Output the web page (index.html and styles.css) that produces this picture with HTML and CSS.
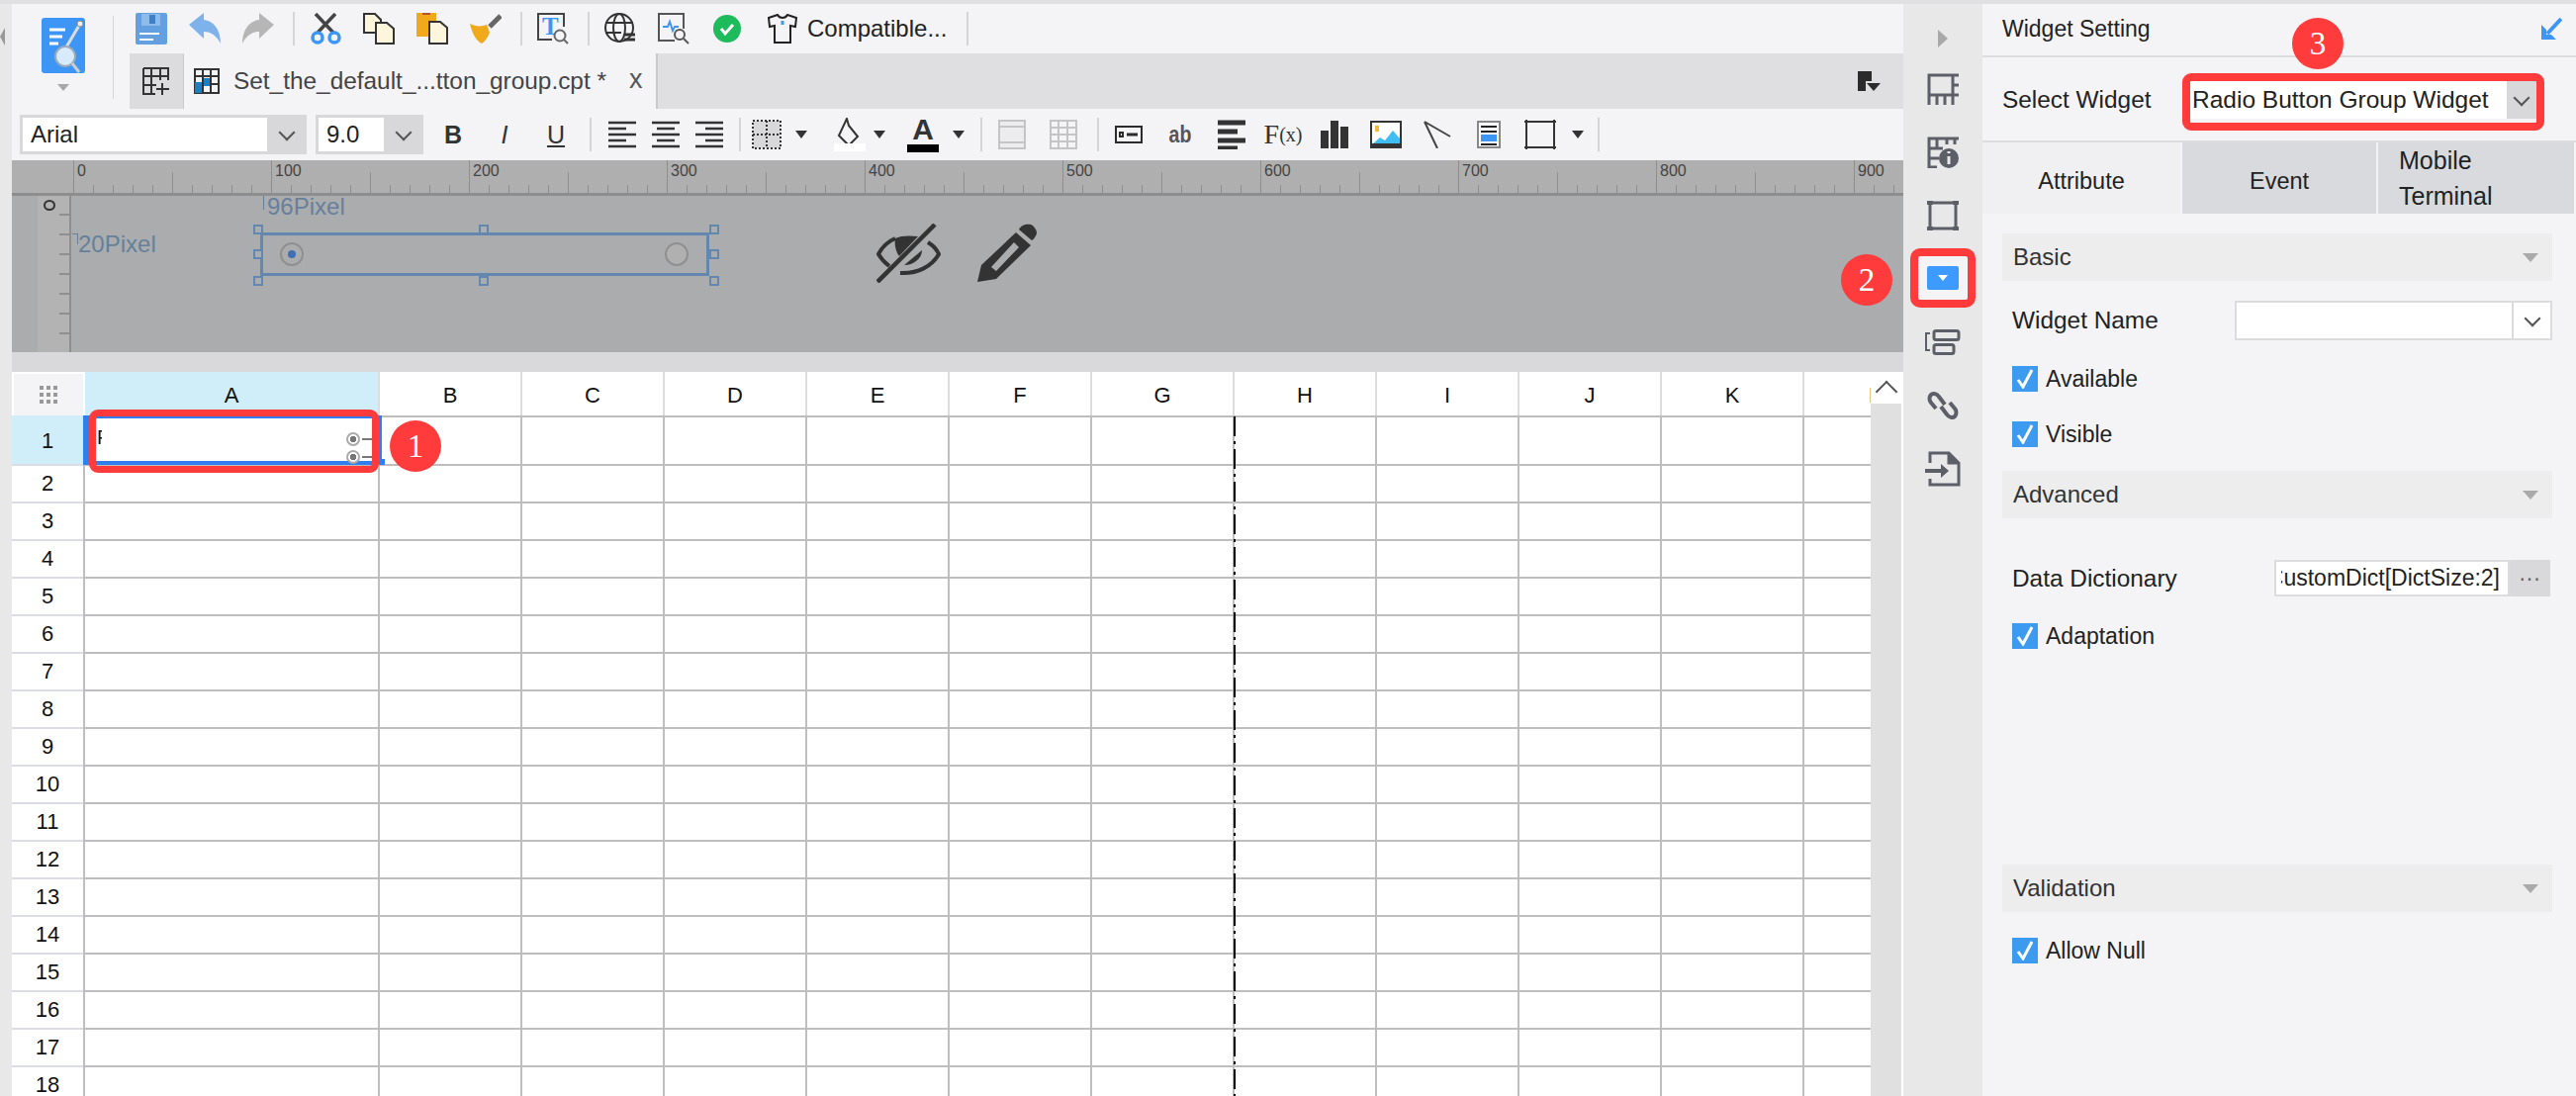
FILE: index.html
```html
<!DOCTYPE html>
<html lang="en">

<head>
    <meta charset="UTF-8">
    <title>Widget Setting</title>
    <link rel="stylesheet" href="styles.css">
</head>

<body>
    <div class="top-strip"></div>
    <div class="main">
        <div class="left-strip"><span class="left-arrow"></span></div>

        <div class="editor">
            <div class="head">
                <div class="logo-col">
                    <svg width="44" height="56" viewBox="0 0 44 56">
                        <rect width="44" height="56" rx="3" fill="#3d96f5"/>
                        <path d="M8 12h16M8 19h13M8 26h9" stroke="#fff" stroke-width="3"/>
                        <path d="M39 6L23 33" stroke="#ddd" stroke-width="3"/>
                        <circle cx="39" cy="6" r="3" fill="#eee" stroke="#888"/>
                        <circle cx="24" cy="39" r="10" fill="#d7ebfb" stroke="#9ab" stroke-width="2"/>
                        <path d="M31 46l7 9" stroke="#ccc" stroke-width="3"/>
                    </svg>
                    <span class="logo-tri"></span>
                </div>
                <div class="head-right">
                    <div class="toolrow">
                        <span class="tool">
                            <svg width="32" height="32" viewBox="0 0 32 32"><rect width="32" height="32" rx="2" fill="#649fdf"/><rect x="6" y="1" width="19" height="12" fill="#8dbcec"/><rect x="14" y="2" width="6" height="9" fill="#3f7fc4"/><path d="M4 21h20M4 27h14" stroke="#fff" stroke-width="2"/></svg>
                        </span>
                        <span class="tool">
                            <svg width="32" height="32" viewBox="0 0 32 32"><path d="M0 12L15 0v7c9 1 17 9 17 24-4-8-10-12-17-12v7z" fill="#7db3ea"/></svg>
                        </span>
                        <span class="tool">
                            <svg width="32" height="32" viewBox="0 0 32 32"><path d="M32 12L17 0v7C8 8 0 16 0 31c4-8 10-12 17-12v7z" fill="#b6b6b6"/></svg>
                        </span>
                        <span class="sep"></span>
                        <span class="tool">
                            <svg width="32" height="32" viewBox="0 0 32 32"><path d="M6 1l18 19M26 1L8 20" stroke="#444" stroke-width="3.500"/><circle cx="8" cy="25" r="5" fill="none" stroke="#3d96f5" stroke-width="3.500"/><circle cx="25" cy="25" r="5" fill="none" stroke="#3d96f5" stroke-width="3.500"/></svg>
                        </span>
                        <span class="tool">
                            <svg width="32" height="32" viewBox="0 0 32 32"><path d="M1 1h11l6 6v13H1z" fill="#fdf5dc" stroke="#333" stroke-width="2"/><path d="M13 10h11l7 6v15H13z" fill="#fdf5dc" stroke="#333" stroke-width="2"/></svg>
                        </span>
                        <span class="tool">
                            <svg width="32" height="32" viewBox="0 0 32 32"><rect width="20" height="24" fill="#f0a91a"/><rect x="6" width="8" height="2" fill="#b5532a"/><path d="M13 9h11l7 6v16H13z" fill="#fdf5dc" stroke="#333" stroke-width="2"/></svg>
                        </span>
                        <span class="tool">
                            <svg width="32" height="32" viewBox="0 0 32 32"><path d="M0 11c6 3 12 3 17 1l3 8c-2 5-5 9-8 11C6 28 2 20 0 11z" fill="#f0a91a"/><path d="M20 14L31 3" stroke="#666" stroke-width="5"/></svg>
                        </span>
                        <span class="sep"></span>
                        <span class="tool">
                            <svg width="32" height="32" viewBox="0 0 32 32"><path d="M15 27H1V1h26v13" fill="none" stroke="#444" stroke-width="2"/><text x="5" y="22" class="svg-t">T</text><circle cx="23" cy="23" r="5.500" fill="none" stroke="#666" stroke-width="2"/><path d="M27 27l4 4" stroke="#666" stroke-width="2"/></svg>
                        </span>
                        <span class="sep"></span>
                        <span class="tool">
                            <svg width="32" height="32" viewBox="0 0 32 32" fill="none" stroke="#333" stroke-width="2"><circle cx="15" cy="15" r="14"/><ellipse cx="15" cy="15" rx="6" ry="14"/><path d="M1 10h28M1 20h16"/><path d="M20 22h11M20 27h11" stroke-width="3"/></svg>
                        </span>
                        <span class="tool">
                            <svg width="32" height="32" viewBox="0 0 32 32" fill="none"><path d="M17 28H1V1h25v15" stroke="#555" stroke-width="2"/><path d="M5 14h5l2-5 3 9 2-4h4" stroke="#3d96f5" stroke-width="2"/><circle cx="22" cy="22" r="5" stroke="#555" stroke-width="2"/><path d="M26 26l5 5" stroke="#555" stroke-width="2"/></svg>
                        </span>
                        <span class="tool">
                            <svg width="28" height="28" viewBox="0 0 28 28"><circle cx="14" cy="14" r="14" fill="#1dbb5c"/><path d="M8 14l4 5 8-9" fill="none" stroke="#fff" stroke-width="3"/></svg>
                        </span>
                        <span class="tool shirt">
                            <svg width="30" height="30" viewBox="0 0 30 30" fill="none"><path d="M10 1L1 4l1 9 5-1v17h16V12l5 1 1-9-9-3c-2 4-8 4-10 0z" stroke="#222" stroke-width="2"/><path d="M15 7v4" stroke="#3d96f5" stroke-width="3"/></svg>
                        </span>
                        <span class="compat">Compatible...</span>
                        <span class="sep sep-wide"></span>
                    </div>
                    <div class="tabbar">
                        <div class="tab-new">
                            <svg width="28" height="28" viewBox="0 0 28 28" fill="none" stroke="#333" stroke-width="2"><path d="M1 1h25v12M1 1v26h12M1 9h25M1 18h13M9 1v26M18 1v12M20 16v12M14 22h13"/></svg>
                        </div>
                        <div class="tab">
                            <svg width="26" height="26" viewBox="0 0 26 26" fill="none" stroke="#333" stroke-width="2"><path d="M1 1h24v24H1zM1 8h24M1 16h24M9 1v24M17 1v24"/><path d="M1 14h7v11H1zM10 10h6v8h-6z" fill="#1b7fc4" stroke="none"/></svg>
                            <span class="tab-name">Set_the_default_...tton_group.cpt *</span>
                            <span class="tab-close">x</span>
                        </div>
                        <span class="tab-menu">
                            <svg width="24" height="20" viewBox="0 0 24 20"><path d="M0 0h14v10H8v10H0z" fill="#2b2b2b"/><path d="M9 12h14l-7 8z" fill="#2b2b2b"/></svg>
                        </span>
                    </div>
                </div>
            </div>

            <div class="format-row">
                <div class="combo combo-font"><span class="combo-val">Arial</span><span class="combo-btn"><i class="chev"></i></span></div>
                <div class="combo combo-size"><span class="combo-val">9.0</span><span class="combo-btn"><i class="chev"></i></span></div>
                <span class="tool ftxt bold">B</span>
                <span class="tool ftxt ital">I</span>
                <span class="tool ftxt under">U</span>
                <span class="sep"></span>
                <span class="tool w44 first-align"><svg width="28" height="28" viewBox="0 0 28 28" stroke="#333" stroke-width="2.400"><path d="M0 2h28M0 8h18M0 14h28M0 20h18M0 26h28"/></svg></span>
                <span class="tool w44"><svg width="28" height="28" viewBox="0 0 28 28" stroke="#333" stroke-width="2.400"><path d="M0 2h28M5 8h18M0 14h28M5 20h18M0 26h28"/></svg></span>
                <span class="tool w44"><svg width="28" height="28" viewBox="0 0 28 28" stroke="#333" stroke-width="2.400"><path d="M0 2h28M10 8h18M0 14h28M10 20h18M0 26h28"/></svg></span>
                <span class="sep"></span>
                <span class="tool w44"><svg width="30" height="30" viewBox="0 0 30 30"><rect x="1" y="1" width="28" height="28" fill="#d8d8da" stroke="#333" stroke-width="2" stroke-dasharray="2 2"/><path d="M15 1v28M1 15h28" stroke="#333" stroke-width="2" stroke-dasharray="2 2"/></svg></span>
                <span class="tool w26"><i class="tri"></i></span>
                <span class="tool bucket"><svg width="32" height="34" viewBox="0 0 32 34"><path d="M13 1l2 7 9 11-9 9-10-10z" fill="#f4f4f7" stroke="#333" stroke-width="2"/><rect y="26" width="32" height="8" fill="#fff" stroke="none"/></svg></span>
                <span class="tool w16"><i class="tri"></i></span>
                <span class="tool font-color"><span class="fc-a">A</span><span class="fc-bar"></span></span>
                <span class="tool w28"><i class="tri"></i></span>
                <span class="sep"></span>
                <span class="tool"><svg width="28" height="30" viewBox="0 0 28 30" fill="none" stroke="#c4c4c6" stroke-width="2"><rect x="1" y="1" width="26" height="28" fill="#ececee"/><path d="M1 7h26M1 23h26"/></svg></span>
                <span class="tool"><svg width="28" height="30" viewBox="0 0 28 30" fill="none" stroke="#c4c4c6" stroke-width="2"><rect x="1" y="1" width="26" height="28"/><path d="M1 8h26M1 15h26M1 22h26M9 1v28M18 1v28"/></svg></span>
                <span class="sep"></span>
                <span class="tool"><svg width="28" height="18" viewBox="0 0 28 18" fill="none" stroke="#2b2b2b" stroke-width="2"><rect x="1" y="1" width="26" height="16"/><rect x="5" y="7" width="3" height="4"/><path d="M12 9h11" stroke-width="3"/></svg></span>
                <span class="tool ab">ab</span>
                <span class="tool"><svg width="28" height="30" viewBox="0 0 28 30" stroke="#333" stroke-width="5"><path d="M0 3h28M0 12h20M0 21h28M0 29h20"/></svg></span>
                <span class="tool fx">F<small>(x)</small></span>
                <span class="tool"><svg width="28" height="28" viewBox="0 0 28 28" fill="#333"><rect y="10" width="8" height="18"/><rect x="10" width="8" height="28"/><rect x="20" y="6" width="8" height="22"/></svg></span>
                <span class="tool"><svg width="32" height="28" viewBox="0 0 32 28"><rect x="1" y="1" width="30" height="26" fill="#fff" stroke="#333" stroke-width="2"/><path d="M2 24l8-7 5 3 8-10 7 8v8H2z" fill="#40bdf5"/><rect x="5" y="5" width="4" height="6" fill="#f5b942"/><rect y="23" width="32" height="5" fill="#333"/></svg></span>
                <span class="tool"><svg width="28" height="28" viewBox="0 0 28 28" fill="none" stroke="#444" stroke-width="2"><path d="M1 1l13 27M1 1l26 15"/></svg></span>
                <span class="tool"><svg width="24" height="28" viewBox="0 0 24 28"><rect x="1" y="1" width="22" height="26" fill="#fff" stroke="#888" stroke-width="2"/><path d="M4 6h16M4 11h16M4 24h16" stroke="#222" stroke-width="2"/><rect x="4" y="14" width="16" height="7" fill="#3d96f5"/></svg></span>
                <span class="tool"><svg width="32" height="30" viewBox="0 0 32 30" fill="#f4f4f7" stroke="#333" stroke-width="2"><rect x="2" y="2" width="28" height="26"/><path d="M0 2h32M0 28h32M2 0v30M30 0v30"/></svg></span>
                <span class="tool w24"><i class="tri"></i></span>
                <span class="sep"></span>
            </div>

            <div class="canvas">
                <div class="ruler-h">
                    <span>0</span><span>100</span><span>200</span><span>300</span><span>400</span>
                    <span>500</span><span>600</span><span>700</span><span>800</span><span>900</span>
                </div>
                <div class="canvas-body">
                    <div class="ruler-v"><i class="ruler-zero"></i></div>
                </div>
                <span class="px-label px-w">96Pixel</span>
                <span class="px-label px-h">20Pixel</span>
                <div class="widget">
                    <span class="radio on"></span>
                    <span class="radio"></span>
                    <i class="hd hl ht"></i><i class="hd hc ht"></i><i class="hd hr ht"></i>
                    <i class="hd hl hm"></i><i class="hd hr hm"></i>
                    <i class="hd hl hb"></i><i class="hd hc hb"></i><i class="hd hr hb"></i>
                </div>
                <svg class="eye-off" width="65" height="60" viewBox="0 0 65 60">
                    <path d="M19 15c5-3 15-3 23-2L23 33c-4-5-5-13-4-18z" fill="#333"/>
                    <path d="M19 15C12 18 6 23 2 31c3 5 7 9 11 12" fill="none" stroke="#333" stroke-width="4"/>
                    <path d="M46 27c0 8-8 15-18 15z" fill="#333"/>
                    <path d="M52 19c5 3 9 7 11 12-7 12-21 20-39 19" fill="none" stroke="#333" stroke-width="4"/>
                    <path d="M1 59L59 1" stroke="#333" stroke-width="4.500"/>
                </svg>
                <svg class="pencil" width="61" height="60" viewBox="0 0 61 60">
                    <path d="M0 59l4-17L39 9l15 13-35 34z" fill="#333"/>
                    <path d="M14 44l23-25 5 5-23 24z" fill="#abacae"/>
                    <path d="M42 6c2-5 8-6 12-5 4 2 6 6 6 9-1 3-3 6-5 7z" fill="#333"/>
                </svg>
            </div>

            <div class="band"></div>

            <div class="sheet">
                <div class="sheet-main">
                    <div class="col-head">
                        <div class="corner"><span class="dots"></span></div>
                        <div class="col col-a">A</div>
                        <div class="col">B</div><div class="col">C</div><div class="col">D</div>
                        <div class="col">E</div><div class="col">F</div><div class="col">G</div>
                        <div class="col">H</div><div class="col">I</div><div class="col">J</div>
                        <div class="col">K</div><div class="col">L</div>
                    </div>
                    <div class="row row-first"><div class="rh">1</div><div class="rc"></div></div>
                    <div class="row"><div class="rh">2</div><div class="rc"></div></div>
                    <div class="row"><div class="rh">3</div><div class="rc"></div></div>
                    <div class="row"><div class="rh">4</div><div class="rc"></div></div>
                    <div class="row"><div class="rh">5</div><div class="rc"></div></div>
                    <div class="row"><div class="rh">6</div><div class="rc"></div></div>
                    <div class="row"><div class="rh">7</div><div class="rc"></div></div>
                    <div class="row"><div class="rh">8</div><div class="rc"></div></div>
                    <div class="row"><div class="rh">9</div><div class="rc"></div></div>
                    <div class="row"><div class="rh">10</div><div class="rc"></div></div>
                    <div class="row"><div class="rh">11</div><div class="rc"></div></div>
                    <div class="row"><div class="rh">12</div><div class="rc"></div></div>
                    <div class="row"><div class="rh">13</div><div class="rc"></div></div>
                    <div class="row"><div class="rh">14</div><div class="rc"></div></div>
                    <div class="row"><div class="rh">15</div><div class="rc"></div></div>
                    <div class="row"><div class="rh">16</div><div class="rc"></div></div>
                    <div class="row"><div class="rh">17</div><div class="rc"></div></div>
                    <div class="row"><div class="rh">18</div><div class="rc"></div></div>

                    <div class="page-break"></div>
                    <div class="cell-sel">
                        <span class="cell-f">F</span>
                        <div class="mini-radios"><span class="mini"></span><span class="mini"></span></div>
                    </div>
                </div>
                <div class="scroll">
                    <div class="scroll-up"><i class="chev up"></i></div>
                </div>
            </div>
        </div>

        <div class="sidebar">
            <span class="side-arrow"></span>
            <div class="side-btn">
                <svg width="32" height="32" viewBox="0 0 32 32" fill="none" stroke="#5c5f68" stroke-width="3"><path d="M2 32V2h30M2 22h30M26 2v20M26 12h6M10 22v10M18 22v10M26 22v10"/></svg>
            </div>
            <div class="side-btn">
                <svg width="32" height="32" viewBox="0 0 32 32" fill="none" stroke="#5c5f68" stroke-width="3"><path d="M2 32V2h30M2 12h14M2 22h10M10 2v10M20 2v6M28 2v6M2 31h8"/><circle cx="22" cy="22" r="10" fill="#5c5f68" stroke="none"/><path d="M22 20v8M22 15v2" stroke="#e8e8e8"/></svg>
            </div>
            <div class="side-btn">
                <svg width="32" height="32" viewBox="0 0 32 32" fill="none" stroke="#5c5f68" stroke-width="3"><rect x="3" y="3" width="26" height="26"/><path d="M0 3h6M26 3h6M0 29h6M26 29h6" stroke-width="4"/></svg>
            </div>
            <div class="side-btn active">
                <span class="combo-ico"><i></i></span>
            </div>
            <div class="side-btn">
                <svg width="36" height="26" viewBox="0 0 36 26" fill="none" stroke="#5c5f68" stroke-width="3"><path d="M5 4H1v17h4" stroke-width="2"/><rect x="9" y="1.500" width="25" height="9" rx="2"/><rect x="9" y="15.500" width="20" height="9" rx="2"/></svg>
            </div>
            <div class="side-btn">
                <svg width="32" height="32" viewBox="0 0 32 32" fill="none" stroke="#5c5f68" stroke-width="4"><path d="M18 15l-6-8c-2-3-6-4-8-2s-2 6 0 8l5 6"/><path d="M14 17l6 8c2 3 6 4 8 2s2-6 0-8l-5-6"/></svg>
            </div>
            <div class="side-btn">
                <svg width="36" height="36" viewBox="0 0 36 36" fill="none" stroke="#5c5f68" stroke-width="3"><path d="M5 12V2h19l10 10v22H5v-6"/><path d="M24 2v10h10" fill="#5c5f68"/><path d="M0 20h20" stroke-width="4"/><path d="M16 13l8 7-8 7z" fill="#5c5f68" stroke="none"/></svg>
            </div>
        </div>

        <div class="panel">
            <div class="panel-head">
                <span>Widget Setting</span>
                <svg width="22" height="24" viewBox="0 0 22 24"><path d="M21 2L7 17" stroke="#3d96f5" stroke-width="4"/><path d="M1 8v15h15l-5-5H6v-5z" fill="#3d96f5"/></svg>
            </div>
            <div class="select-row">
                <span class="select-label">Select Widget</span>
                <div class="combo combo-widget"><span class="combo-val">Radio Button Group Widget</span><span class="combo-btn"><i class="chev"></i></span></div>
            </div>
            <div class="tabs">
                <div class="ptab ptab-on">Attribute</div>
                <div class="ptab ptab-event">Event</div>
                <div class="ptab ptab-two">Mobile<br>Terminal</div>
            </div>
            <div class="panel-body">
                <div class="section">Basic<i class="sec-tri"></i></div>
                <div class="field name-field">
                    <span class="field-label name-label">Widget Name</span>
                    <div class="name-input"><span></span><span class="name-btn"><i class="chev"></i></span></div>
                </div>
                <label class="check check-first"><span class="box"><svg width="18" height="20" viewBox="0 0 18 20"><path d="M2 11l5 7 9-17" fill="none" stroke="#fff" stroke-width="3"/></svg></span>Available</label>
                <label class="check check-next"><span class="box"><svg width="18" height="20" viewBox="0 0 18 20"><path d="M2 11l5 7 9-17" fill="none" stroke="#fff" stroke-width="3"/></svg></span>Visible</label>
                <div class="section sec-adv">Advanced<i class="sec-tri"></i></div>
                <div class="field dict-field">
                    <span class="field-label dict-label">Data Dictionary</span>
                    <div class="dict-input"><span class="dict-val"><span>CustomDict[DictSize:2]</span></span></div>
                    <span class="dict-btn">...</span>
                </div>
                <label class="check check-adapt"><span class="box"><svg width="18" height="20" viewBox="0 0 18 20"><path d="M2 11l5 7 9-17" fill="none" stroke="#fff" stroke-width="3"/></svg></span>Adaptation</label>
                <div class="section sec-val">Validation<i class="sec-tri"></i></div>
                <label class="check check-first"><span class="box"><svg width="18" height="20" viewBox="0 0 18 20"><path d="M2 11l5 7 9-17" fill="none" stroke="#fff" stroke-width="3"/></svg></span>Allow Null</label>
            </div>
        </div>
    </div>

    <!-- red callouts sit over everything -->
    <div class="mark mark-cell"></div>
    <div class="mark mark-widget"></div>
    <span class="badge badge-1">1</span>
    <span class="badge badge-2">2</span>
    <span class="badge badge-3">3</span>
</body>

</html>
```

FILE: styles.css
```css
html, body {
    margin: 0;
    padding: 0;
    height: 100%;
    overflow: hidden;
}

body {
    position: relative;
    display: flex;
    flex-direction: column;
    font-family: "Liberation Sans", Arial, sans-serif;
    font-size: 23px;
    color: #222;
    background: #f4f4f7;
}

.top-strip {
    height: 4px;
    flex: none;
    background: #e0e0e2;
}

.main {
    flex: 1;
    display: flex;
    min-height: 0;
}

.left-strip {
    width: 12px;
    flex: none;
    background: #e8e8e8;
    position: relative;
}

.left-arrow {
    position: absolute;
    top: 24px;
    left: 0;
    border-style: solid;
    border-width: 9px 5px 9px 0;
    border-color: transparent #999 transparent transparent;
}

.editor {
    width: 1912px;
    flex: none;
    display: flex;
    flex-direction: column;
    min-height: 0;
}

/* toolbar */
.head {
    display: flex;
    height: 106px;
    flex: none;
}

.logo-col {
    width: 103px;
    flex: none;
    display: flex;
    flex-direction: column;
    align-items: center;
    padding: 14px 0 0 0;
    box-sizing: border-box;
    position: relative;
}

.logo-col::after {
    content: "";
    position: absolute;
    right: 0;
    top: 12px;
    bottom: 10px;
    width: 1px;
    background: #d5d5d8;
}

.logo-tri {
    margin-top: 11px;
    border-style: solid;
    border-width: 7px 6px 0 6px;
    border-color: #a8a8a8 transparent transparent transparent;
}

.head-right {
    flex: 1;
    display: flex;
    flex-direction: column;
    min-width: 0;
}

.toolrow {
    height: 50px;
    display: flex;
    align-items: center;
    padding-left: 11px;
    flex: none;
}

.tool {
    width: 54px;
    flex: none;
    display: flex;
    align-items: center;
    justify-content: center;
}

.shirt {
    padding-left: 3px;
    box-sizing: border-box;
}

.svg-t {
    font-family: "Liberation Serif", serif;
    font-size: 25px;
    font-weight: bold;
    fill: #3d96f5;
}

.sep {
    width: 2px;
    height: 34px;
    flex: none;
    margin: 0 4px 0 8px;
    background: #d5d5d8;
}

.sep-wide {
    margin-left: 20px;
}

.compat {
    font-size: 24px;
    color: #222;
    white-space: nowrap;
}

.tabbar {
    height: 56px;
    margin-left: 16px;
    display: flex;
    background: #dfdfe1;
    align-items: stretch;
    flex: none;
}

.tab-new {
    width: 54px;
    flex: none;
    display: flex;
    align-items: center;
    justify-content: center;
    background: #dcdcde;
}

.tab {
    width: 480px;
    flex: none;
    box-sizing: border-box;
    display: flex;
    align-items: center;
    padding-left: 10px;
    background: #f4f4f7;
    border-left: 1px solid #c9c9cc;
    border-right: 2px solid #c9c9cc;
}

.tab-name {
    margin-left: 14px;
    font-size: 24.400px;
    color: #444;
    white-space: nowrap;
    width: 400px;
}

.tab-close {
    font-size: 27px;
    color: #555;
    margin-bottom: 4px;
}

.tab-menu {
    margin-left: auto;
    margin-right: 22px;
    display: flex;
    align-items: center;
}

.format-row {
    height: 52px;
    flex: none;
    display: flex;
    align-items: center;
    padding-left: 8px;
}

.format-row .tool {
    width: 52px;
}

.format-row .w44 { width: 44px; }
.format-row .w26 { width: 26px; }
.format-row .w16 { width: 16px; }
.format-row .w24 { width: 24px; }
.format-row .w28 { width: 28px; }

.format-row .first-align {
    margin-left: 5px;
}

.format-row .bucket {
    width: 44px;
    margin-left: 14px;
}

.format-row .font-color {
    width: 44px;
    margin-left: 14px;
    flex-direction: column;
}

.combo {
    display: flex;
    box-sizing: border-box;
    height: 40px;
    flex: none;
    background: #d8d8da;
}

.combo-val {
    background: #fff;
    display: flex;
    align-items: center;
    color: #222;
    font-size: 24px;
    padding-left: 8px;
    box-sizing: border-box;
    margin: 3px 0 3px 3px;
}

.combo-btn {
    flex: 1;
    display: flex;
    align-items: center;
    justify-content: center;
}

.combo-font {
    width: 290px;
}

.combo-font .combo-val {
    width: 247px;
}

.combo-size {
    width: 109px;
    margin: 0 4px 0 9px;
}

.combo-size .combo-val {
    width: 66px;
}

.chev {
    display: block;
    width: 10px;
    height: 10px;
    border-right: 2px solid #555;
    border-bottom: 2px solid #555;
    transform: rotate(45deg);
    margin-top: -5px;
}

.chev.up {
    transform: rotate(225deg);
    margin-top: 12px;
    width: 14px;
    height: 14px;
}

.tri {
    display: block;
    border-style: solid;
    border-width: 8px 6px 0 6px;
    border-color: #333 transparent transparent transparent;
}

.ftxt {
    font-size: 25px;
    color: #333;
}

.bold { font-weight: bold; }
.ital { font-style: italic; }
.under { text-decoration: underline; }

.fc-a {
    font-size: 30px;
    font-weight: bold;
    line-height: 26px;
    color: #333;
}

.fc-bar {
    width: 32px;
    height: 8px;
    background: #000;
    margin-top: 2px;
}

.format-row .ab {
    font-size: 23px;
    font-weight: bold;
    color: #555;
    transform: scaleX(0.85);
}

.fx {
    font-family: "Liberation Serif", serif;
    font-size: 28px;
    color: #333;
}

.fx small {
    font-size: 20px;
}

/* design canvas */
.canvas {
    height: 194px;
    flex: none;
    position: relative;
    overflow: hidden;
    background: #abacae;
    display: flex;
    flex-direction: column;
}

.ruler-h {
    height: 33px;
    flex: none;
    display: flex;
    padding-left: 62px;
    border-bottom: 3px solid #8e8e8e;
    background-color: #afafaf;
    background-image:
        repeating-linear-gradient(90deg, #8f8f8f 0 1px, transparent 1px 200px),
        repeating-linear-gradient(90deg, #8f8f8f 0 1px, transparent 1px 100px),
        repeating-linear-gradient(90deg, #8f8f8f 0 1px, transparent 1px 20px);
    background-position: 62px 0, 62px 12px, 62px 25px;
    background-repeat: no-repeat;
}

.ruler-h span {
    width: 200px;
    flex: none;
    box-sizing: border-box;
    padding: 1px 0 0 4px;
    font-size: 16px;
    line-height: 19px;
    color: #444;
}

.canvas-body {
    flex: 1;
    display: flex;
    padding-left: 26px;
}

.ruler-v {
    width: 34px;
    box-sizing: border-box;
    position: relative;
    border-right: 2px solid #8e8e8e;
    background-color: #b3b3b3;
    background-image:
        repeating-linear-gradient(180deg, #8f8f8f 0 2px, transparent 2px 20px);
    background-size: 10px 100%;
    background-position: right 0 top 18px;
    background-repeat: no-repeat;
}

.ruler-zero {
    position: absolute;
    left: 6px;
    top: 4px;
    width: 8px;
    height: 7px;
    border: 2px solid #333;
    border-radius: 50%;
}

.px-label {
    position: absolute;
    font-size: 24px;
    line-height: 26px;
    color: #66809c;
}

.px-w {
    left: 258px;
    top: 34px;
}

.px-w::before {
    content: "";
    position: absolute;
    left: -4px;
    top: 2px;
    height: 14px;
    width: 1px;
    background: #66809c;
}

.px-h {
    left: 67px;
    top: 72px;
}

.px-h::before {
    content: "";
    position: absolute;
    left: -6px;
    top: 2px;
    height: 10px;
    width: 5px;
    border-top: 1px solid #66809c;
    border-right: 1px solid #66809c;
}

.widget {
    position: absolute;
    left: 251px;
    top: 73px;
    width: 454px;
    height: 44px;
    box-sizing: border-box;
    border: 3px solid #6487b0;
    display: flex;
    align-items: center;
    justify-content: space-between;
    padding: 0 18px 0 17px;
}

.radio {
    width: 24px;
    height: 24px;
    box-sizing: border-box;
    border: 2px solid #8f8f8f;
    border-radius: 50%;
    background: #b0b0b0;
    position: relative;
}

.radio.on {
    background: #abacae;
}

.radio.on::after {
    content: "";
    position: absolute;
    left: 6px;
    top: 6px;
    width: 8px;
    height: 8px;
    border-radius: 50%;
    background: #3f6fb5;
}

.hd {
    position: absolute;
    width: 10px;
    height: 10px;
    box-sizing: border-box;
    border: 2px solid #6487b0;
    background: #abacae;
}

.hl { left: -10px; }
.hc { left: 50%; margin-left: -6px; }
.hr { right: -13px; }
.ht { top: -11px; }
.hm { top: 50%; margin-top: -5px; }
.hb { bottom: -13px; }

.eye-off {
    position: absolute;
    left: 874px;
    top: 64px;
}

.pencil {
    position: absolute;
    left: 976px;
    top: 64px;
}

.band {
    height: 20px;
    flex: none;
    background: #d9d9db;
}

/* spreadsheet */
.sheet {
    flex: 1;
    min-height: 0;
    display: flex;
    background: #fff;
    overflow: hidden;
}

.sheet-main {
    width: 1879px;
    flex: none;
    position: relative;
    overflow: hidden;
}

.col-head {
    display: flex;
    height: 44px;
    width: 2200px;
}

.corner {
    width: 70px;
    flex: none;
    box-sizing: border-box;
    margin: 2px 0 0 2px;
    background: #f4f4f7;
    display: flex;
    align-items: center;
    justify-content: center;
}

.dots {
    width: 4px;
    height: 4px;
    background: #999;
    box-shadow: 7px 0 #999, 14px 0 #999, 0 7px #999, 7px 7px #999, 14px 7px #999, 0 14px #999, 7px 14px #999, 14px 14px #999;
    margin: -14px 14px 0 0;
}

.col {
    width: 144px;
    flex: none;
    box-sizing: border-box;
    display: flex;
    align-items: center;
    justify-content: center;
    padding-top: 3px;
    font-size: 22px;
    color: #111;
    border-left: 2px solid #dcdcdc;
}

.col-a {
    width: 298px;
    background: #cfeefa;
    border-left: 2px solid #fff;
}

.row {
    display: flex;
    height: 38px;
    box-sizing: border-box;
}

.row-first {
    height: 49px;
}

.rh {
    width: 72px;
    flex: none;
    box-sizing: border-box;
    display: flex;
    align-items: center;
    justify-content: center;
    font-size: 22px;
    color: #111;
    border-top: 2px solid #dcdce4;
}

.row-first .rh {
    background: #cfeefa;
    border-top-color: #cfeefa;
}

.rc {
    flex: 1;
    border-top: 2px solid #bebebe;
    background-image:
        linear-gradient(#bebebe, #bebebe),
        linear-gradient(#bebebe, #bebebe),
        repeating-linear-gradient(90deg, #bebebe 0 2px, transparent 2px 144px);
    background-size: 2px 100%, 2px 100%, 100% 100%;
    background-position: 0 0, 298px 0, 442px 0;
    background-repeat: no-repeat;
}

.page-break {
    position: absolute;
    left: 1235px;
    top: 45px;
    bottom: 0;
    width: 2px;
    background: repeating-linear-gradient(180deg, #000 0 20px, transparent 20px 25px, #000 25px 28px, transparent 28px 33px);
}

.cell-sel {
    position: absolute;
    left: 72px;
    top: 44px;
    width: 302px;
    height: 50px;
    box-sizing: border-box;
    border: 3px solid #2f7ff0;
    border-width: 3px 3px 4px 6px;
}

.cell-sel::after {
    content: "";
    position: absolute;
    right: -6px;
    bottom: -4px;
    width: 10px;
    height: 6px;
    background: #2f7ff0;
}

.cell-f {
    position: absolute;
    left: 8px;
    top: 8px;
    width: 5px;
    overflow: hidden;
    font-size: 20px;
    line-height: 22px;
    color: #111;
}

.mini-radios {
    position: absolute;
    right: 3px;
    top: 14px;
    display: flex;
    flex-direction: column;
    gap: 4px;
}

.mini {
    position: relative;
    display: block;
    width: 14px;
    height: 14px;
    box-sizing: border-box;
    margin-right: 16px;
    border: 2px solid #aaa;
    border-radius: 50%;
    background: radial-gradient(#777 0 3px, #fff 3px);
}

.mini::after {
    content: "";
    position: absolute;
    left: 14px;
    top: 4px;
    width: 10px;
    height: 2px;
    background: #777;
}

.scroll {
    flex: 1;
    display: flex;
    flex-direction: column;
    padding-right: 2px;
    background: #fff;
}

.scroll-up {
    height: 32px;
    display: flex;
    justify-content: center;
    flex: none;
    background: #fff;
}

.scroll::after {
    content: "";
    flex: 1;
    background: #e0e0e0;
}

/* icon column */
.sidebar {
    width: 80px;
    flex: none;
    display: flex;
    flex-direction: column;
    align-items: center;
    background: #e8e8e8;
}

.side-arrow {
    margin: 26px 0 10px 0;
    border-style: solid;
    border-width: 9px 0 9px 10px;
    border-color: transparent transparent transparent #a9a9a9;
}

.side-btn {
    height: 64px;
    width: 100%;
    flex: none;
    display: flex;
    align-items: center;
    justify-content: center;
}

.side-btn.active {
    width: 66px;
    height: 60px;
    margin: 1px 0 3px;
    box-sizing: border-box;
    border: 8px solid #ff3b3b;
    border-radius: 10px;
    background: #f4f4f7;
}

.combo-ico {
    width: 32px;
    height: 24px;
    border-radius: 2px;
    background: #3d9bff;
    display: flex;
    align-items: center;
    justify-content: center;
}

.combo-ico i {
    border-style: solid;
    border-width: 6px 5px 0 5px;
    border-color: #fff transparent transparent transparent;
}

/* right panel */
.panel {
    flex: 1;
    min-width: 0;
    display: flex;
    flex-direction: column;
}

.panel-head {
    height: 54px;
    flex: none;
    box-sizing: border-box;
    display: flex;
    align-items: center;
    justify-content: space-between;
    padding: 0 14px 2px 20px;
    border-bottom: 2px solid #dcdcdf;
}

.select-row {
    height: 84px;
    flex: none;
    display: flex;
    align-items: center;
    padding-left: 20px;
    padding-top: 2px;
    box-sizing: border-box;
}

.select-label {
    width: 190px;
    flex: none;
    font-size: 24.400px;
}

.combo-widget {
    width: 350px;
    height: 38px;
}

.combo-widget .combo-val {
    width: 320px;
    margin: 0;
    padding-left: 2px;
    font-size: 24.500px;
    white-space: nowrap;
}

.tabs {
    display: flex;
    height: 74px;
    flex: none;
    box-sizing: border-box;
    border-top: 2px solid #dcdcdf;
    gap: 2px;
}

.ptab {
    display: flex;
    align-items: center;
    justify-content: center;
    background: #d9dadd;
    padding-top: 6px;
    box-sizing: border-box;
    font-size: 23.500px;
}

.ptab-on {
    background: #f0f0f3;
    width: 200px;
}

.ptab-event {
    width: 196px;
}

.ptab-two {
    width: 198px;
    justify-content: flex-start;
    padding-left: 21px;
    padding-top: 0;
    line-height: 36px;
    font-size: 25px;
}

.panel-body {
    padding: 20px 24px 0 20px;
    display: flex;
    flex-direction: column;
}

.section {
    height: 48px;
    flex: none;
    display: flex;
    align-items: center;
    justify-content: space-between;
    padding: 0 14px 0 11px;
    background: #ededed;
    color: #333;
    font-size: 24px;
}

.sec-tri {
    border-style: solid;
    border-width: 9px 8px 0 8px;
    border-color: #aaa transparent transparent transparent;
}

.sec-adv {
    margin-top: 24px;
}

.sec-val {
    margin-top: 218px;
}

.field {
    display: flex;
    align-items: center;
    padding-left: 10px;
}

.field-label {
    font-size: 24.400px;
}

.name-field {
    margin-top: 20px;
    height: 40px;
}

.name-label {
    width: 225px;
    flex: none;
}

.name-input {
    flex: 1;
    height: 40px;
    box-sizing: border-box;
    display: flex;
    justify-content: space-between;
    border: 2px solid #dcdcdf;
    background: #fff;
}

.name-btn {
    width: 37px;
    display: flex;
    align-items: center;
    justify-content: center;
    border-left: 2px solid #dcdcdf;
}

.dict-field {
    margin-top: 42px;
    height: 37px;
}

.dict-label {
    width: 265px;
    flex: none;
}

.dict-input {
    width: 238px;
    height: 37px;
    box-sizing: border-box;
    flex: none;
    border: 2px solid #dcdcdf;
    background: #fff;
    display: flex;
    align-items: center;
}

.dict-val {
    flex: 1;
    min-width: 0;
    margin: 0 8px 0 5px;
    overflow: hidden;
    display: flex;
    justify-content: flex-end;
    white-space: nowrap;
}

.dict-val span {
    flex: none;
}

.dict-btn {
    width: 41px;
    height: 37px;
    flex: none;
    background: #d9d9db;
    color: #666;
    text-align: center;
    line-height: 26px;
    letter-spacing: 1px;
}

.check {
    display: flex;
    align-items: center;
    height: 26px;
    flex: none;
    padding-left: 10px;
    gap: 8px;
    line-height: 24px;
}

.box {
    width: 26px;
    height: 26px;
    flex: none;
    display: flex;
    align-items: center;
    justify-content: center;
    background: #3d9bef;
}

.check-first {
    margin-top: 26px;
}

.check-next {
    margin-top: 30px;
}

.check-adapt {
    margin-top: 27px;
}

/* red callouts */
.mark {
    position: absolute;
    box-sizing: border-box;
    border: 7px solid #ff3b3b;
    border-radius: 9px;
}

.mark-cell {
    left: 90px;
    top: 414px;
    width: 293px;
    height: 64px;
}

.mark-widget {
    left: 2206px;
    top: 74px;
    width: 366px;
    height: 58px;
    border-width: 8px;
}

.badge {
    position: absolute;
    width: 52px;
    height: 52px;
    border-radius: 50%;
    background: #ff3b3b;
    color: #fff;
    font-family: "Liberation Serif", serif;
    font-size: 33px;
    display: flex;
    align-items: center;
    justify-content: center;
}

.badge-1 { left: 394px; top: 425px; }
.badge-2 { left: 1861px; top: 257px; }
.badge-3 { left: 2317px; top: 18px; }
```
